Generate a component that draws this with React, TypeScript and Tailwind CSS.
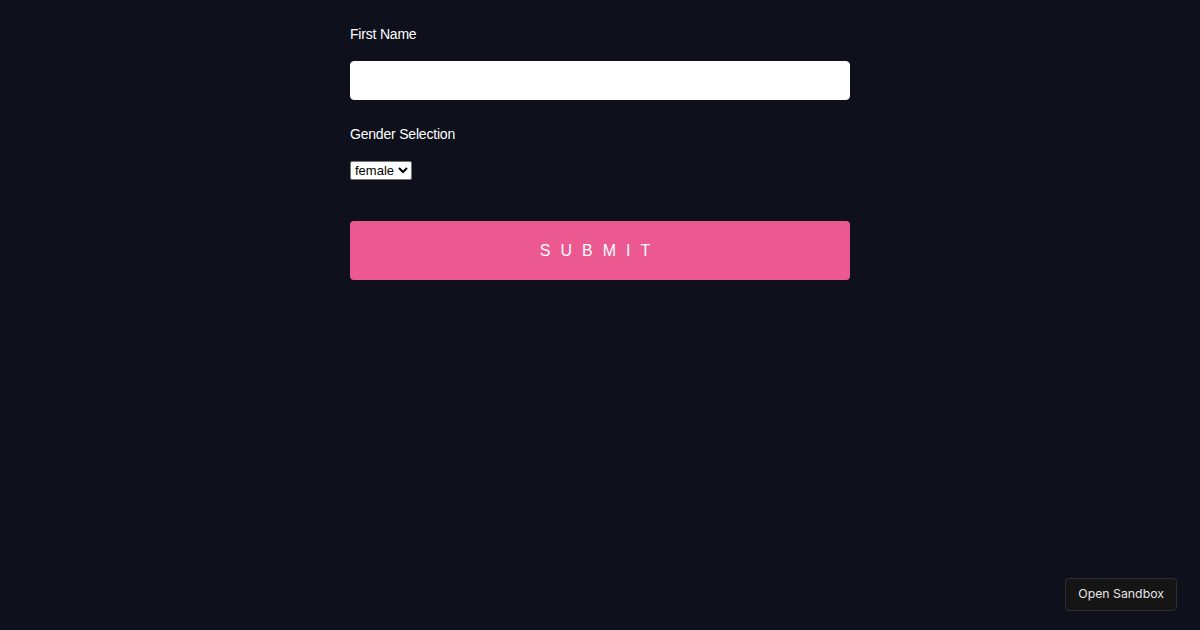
import React from "react";

export default function App() {
  return (
    <div className="min-h-[630px] w-full bg-[#0e101c] font-['Liberation_Sans',Arial,sans-serif] relative">
      <form className="mx-auto max-w-[500px]" onSubmit={(e) => e.preventDefault()}>
        <div className="pt-5">
          <label className="block text-left text-white text-[14px] leading-[28px] font-extralight tracking-[-0.2px] mb-[13px]">
            First Name
          </label>
          <input
            className="block w-full box-border rounded-[4px] border border-white bg-white text-black px-[15px] py-[10px] text-[14px] leading-[17px]"
            type="text"
          />
          <label className="block text-left text-white text-[14px] leading-[28px] font-extralight tracking-[-0.2px] mt-5 mb-[13px]">
            Gender Selection
          </label>
          <div className="h-[20px]">
            <select
              defaultValue="female"
              className="block mt-[1px] bg-white text-black text-[13px] font-['Liberation_Sans',Arial,sans-serif] border border-[#767676] rounded-[2px] h-[19px]"
            >
              <option value="female">female</option>
              <option value="male">male</option>
              <option value="other">other</option>
            </select>
          </div>
          <button
            type="submit"
            className="block w-full mt-10 bg-[#ec5990] text-white uppercase rounded-[4px] p-5 text-[16px] leading-[19px] font-thin tracking-[10px]"
          >
            Submit
          </button>
        </div>
      </form>
      <button className="absolute right-[23px] bottom-[19px] h-[33px] px-3 rounded-[4px] border border-[#2f2f2f] bg-[#151515] text-[#e5e5e5] text-[12.3px] font-['Inter',sans-serif]">
        Open Sandbox
      </button>
    </div>
  );
}
